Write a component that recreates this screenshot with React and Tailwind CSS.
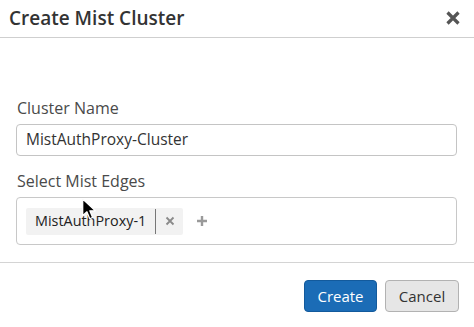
export default function App() {
  return (
    <div
      className="relative w-[474px] h-[327px] bg-white overflow-hidden text-[#333]"
      style={{ fontFamily: '"Open Sans", "Noto Sans", sans-serif' }}
    >
      <div className="flex items-center justify-between h-[38px] pl-[9px] pr-[13px] border-b border-[#cfcfcf]">
        <h1 className="text-[19px] font-semibold leading-none text-[#333] -mt-[1px]">Create Mist Cluster</h1>
        <svg width="16" height="16" viewBox="0 0 16 16" className="-mt-[1px]">
          <path d="M2.5 2.5 L13.5 13.5 M13.5 2.5 L2.5 13.5" stroke="#555" strokeWidth="3.2" strokeLinecap="butt" />
        </svg>
      </div>

      <div className="flex flex-col px-[16px] pt-[59px] w-[474px]">
        <label className="text-[16px] leading-[22px] text-[#4a4a4a] pl-[1px]">Cluster Name</label>
        <div className="mt-[5px] w-[441px] h-[32px] border border-[#c4c4c4] rounded-[4px] flex items-center pl-[9px] text-[15.5px] text-[#333]">
          MistAuthProxy-Cluster
        </div>
        <label className="mt-[14px] text-[16px] leading-[22px] text-[#4a4a4a] pl-[1px]">Select Mist Edges</label>
        <div className="mt-[5px] w-[441px] h-[48px] border border-[#c8c8c8] rounded-[4px] flex items-center pl-[9px]">
          <div className="flex items-center h-[27px] bg-[#f2f2f2] rounded-[2px]">
            <span className="pl-[9px] pr-[9px] text-[14.4px] text-[#222] leading-none">MistAuthProxy-1</span>
            <div className="w-[1px] h-[25px] bg-[#777]" />
            <div className="w-[27px] flex items-center justify-center">
              <svg width="10" height="10" viewBox="0 0 10 10">
                <path d="M1.5 1.5 L8.5 8.5 M8.5 1.5 L1.5 8.5" stroke="#8a8a8a" strokeWidth="1.8" />
              </svg>
            </div>
          </div>
          <div className="ml-[13px] flex items-center">
            <svg width="12" height="12" viewBox="0 0 12 12">
              <path d="M6 1 V11 M1 6 H11" stroke="#9a9a9a" strokeWidth="2.4" />
            </svg>
          </div>
        </div>
      </div>

      <div className="absolute left-0 right-0 top-[262px] border-t border-[#d4d4d4]" />

      <div className="absolute right-[15px] top-[280px] flex gap-[8px]">
        <button className="w-[73px] h-[32px] rounded-[4px] bg-[#1b6cb6] border border-[#135a9c] text-white text-[15px]">Create</button>
        <button className="w-[74px] h-[32px] rounded-[4px] bg-[#e6e6e6] border border-[#b2b2b2] text-[#333] text-[15px]">Cancel</button>
      </div>

      <svg className="absolute left-[81px] top-[198px]" width="17" height="23" viewBox="0 0 16 22">
        <path d="M1.5 1 L1.5 17 L5.5 13.2 L8.3 19.8 L11 18.6 L8.3 12.2 L13.6 12.2 Z" fill="#000" stroke="#fff" strokeWidth="1.2" strokeLinejoin="round" />
      </svg>
    </div>
  );
}
